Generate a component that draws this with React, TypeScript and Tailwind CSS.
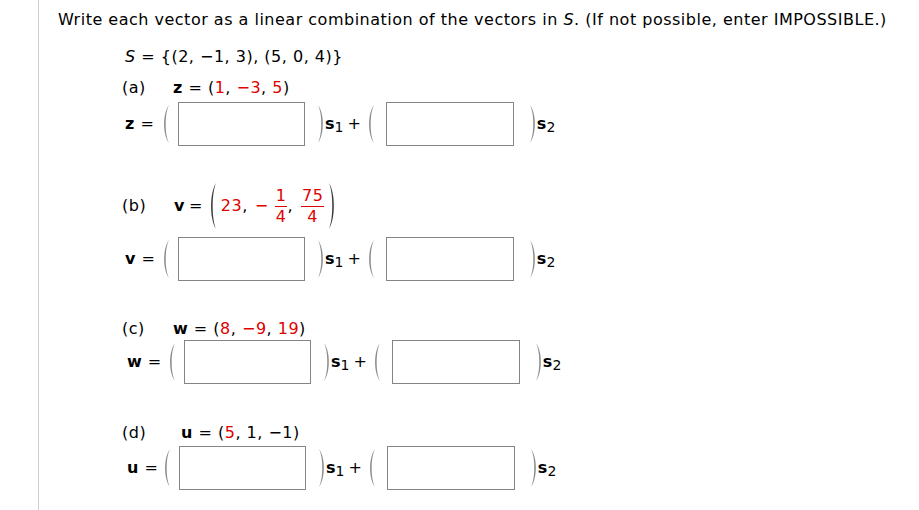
import React from 'react';

const RED = 'text-[#e00000]';

const Paren = ({ side, h = 38, color = '#8c8c8c' }: { side: 'l' | 'r'; h?: number; color?: string }) => {
  const d =
    side === 'l'
      ? `M7 0 C0.5 ${h * 0.22} 0.5 ${h * 0.78} 7 ${h} C2.6 ${h * 0.78} 2.6 ${h * 0.22} 7 0 Z`
      : `M1 0 C7.5 ${h * 0.22} 7.5 ${h * 0.78} 1 ${h} C5.4 ${h * 0.78} 5.4 ${h * 0.22} 1 0 Z`;
  return (
    <svg width="8" height={h} viewBox={`0 0 8 ${h}`} className="shrink-0 block">
      <path d={d} fill={color} />
    </svg>
  );
};

const Box = ({ w }: { w: string }) => <div className={`${w} h-[44px] border border-[#858585] bg-white shrink-0`} />;

const S = ({ n }: { n: number }) => (
  <span className="whitespace-nowrap tracking-normal">
    <b>s</b>
    <span className="text-[14px] relative top-[3px]">{n}</span>
  </span>
);

const AnswerRow = ({ v, lw, pl }: { v: string; lw: string; pl: string }) => (
  <div className={`flex items-center h-[44px] ${pl}`}>
    <span className={`whitespace-nowrap ${lw}`}>
      <b>{v}</b> =
    </span>
    <Paren side="l" />
    <span className="ml-[8px]"><Box w="w-[127px]" /></span>
    <span className="ml-[12px]"><Paren side="r" /></span>
    <S n={1} />
    <span className="ml-[4px] tracking-normal">+</span>
    <span className="ml-[6px]"><Paren side="l" /></span>
    <span className="ml-[11px]"><Box w="w-[128px]" /></span>
    <span className="ml-[15px]"><Paren side="r" /></span>
    <S n={2} />
  </div>
);

const Label = ({ l, children }: { l: string; children: React.ReactNode }) => (
  <div className="flex items-center pl-[64px]">
    <span className="w-[51px]">({l})</span>
    <span className="whitespace-nowrap">{children}</span>
  </div>
);

const Frac = ({ n, d }: { n: string; d: string }) => (
  <span className={`inline-flex flex-col items-center leading-[20px] ${RED}`}>
    <span className="px-[1px]">{n}</span>
    <span className="h-px w-full bg-[#e00000]" />
    <span className="px-[1px]">{d}</span>
  </span>
);

export default function App() {
  return (
    <div
      className="min-h-[510px] bg-white text-black text-[16px] leading-[18px] tracking-[0.5px]"
      style={{ fontFamily: '"DejaVu Sans", Verdana, sans-serif' }}
    >
      <div className="ml-[38px] border-l border-[#cfcfcf] min-h-[510px] pl-[19px] pt-[11px]">
        <div>Write each vector as a linear combination of the vectors in <i>S</i>. (If not possible, enter IMPOSSIBLE.)</div>

        <div className="pl-[67px] mt-[19px]">
          <i>S</i> = {'{'}(2, −1, 3), (5, 0, 4){'}'}
        </div>

        <div className="mt-[13px]">
          <Label l="a">
            <b>z</b> = (<span className={RED}>1</span>, <span className={RED}>−3</span>, <span className={RED}>5</span>)
          </Label>
        </div>
        <div className="mt-[5px]">
          <AnswerRow v="z" lw="w-[37px]" pl="pl-[67px]" />
        </div>

        <div className="mt-[36px] flex items-center pl-[64px] h-[48px]">
          <span className="w-[52px]">(b)</span>
          <b>v</b>
          <span className="ml-[4px]">=</span>
          <span className="ml-[6px]"><Paren side="l" h={46} color="#3a3a3a" /></span>
          <span className={`${RED} ml-[4px]`}>23</span>
          <span>,</span>
          <span className={`${RED} ml-[7px]`}>−</span>
          <span className="ml-[6px]"><Frac n="1" d="4" /></span>
          <span>,</span>
          <span className="ml-[8px]"><Frac n="75" d="4" /></span>
          <span className="ml-[4px]"><Paren side="r" h={46} color="#3a3a3a" /></span>
        </div>
        <div className="mt-[7px]">
          <AnswerRow v="v" lw="w-[37px]" pl="pl-[67px]" />
        </div>

        <div className="mt-[39px]">
          <Label l="c">
            <b>w</b> = (<span className={RED}>8</span>, <span className={RED}>−9</span>, <span className={RED}>19</span>)
          </Label>
        </div>
        <div className="mt-[2px]">
          <AnswerRow v="w" lw="w-[41px]" pl="pl-[69px]" />
        </div>

        <div className="mt-[40px]">
          <Label l="d">
            <span className="ml-[8px]"><b>u</b> = (<span className={RED}>5</span>, 1, −1)</span>
          </Label>
        </div>
        <div className="mt-[4px]">
          <AnswerRow v="u" lw="w-[36px]" pl="pl-[69px]" />
        </div>
      </div>
    </div>
  );
}
